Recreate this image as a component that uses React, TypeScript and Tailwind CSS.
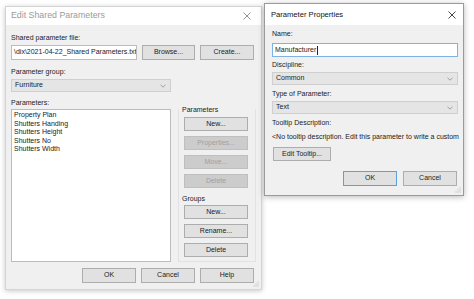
import React from 'react';

const font = { fontFamily: '"Liberation Sans", Arial, sans-serif' };

function CloseX({ dark }: { dark?: boolean }) {
  return (
    <svg width="8" height="8" viewBox="0 0 8 8" className="block">
      <path d="M0.5 0.5 L7.5 7.5 M7.5 0.5 L0.5 7.5" stroke={dark ? '#333' : '#8a8a8a'} strokeWidth="0.9" />
    </svg>
  );
}

function Chevron() {
  return (
    <svg width="6" height="4" viewBox="0 0 6 4" className="block">
      <path d="M0.5 0.8 L3 3.2 L5.5 0.8" stroke="#8c8c8c" strokeWidth="0.8" fill="none" />
    </svg>
  );
}

function Grip() {
  return (
    <svg width="6" height="6" viewBox="0 0 6 6" className="absolute right-[2px] bottom-[2px]">
      {[[5, 1], [3, 3], [5, 3], [1, 5], [3, 5], [5, 5]].map(([x, y], i) => (
        <rect key={i} x={x - 0.5} y={y - 0.5} width="1" height="1" fill="#b5b5b5" />
      ))}
    </svg>
  );
}

function Btn({ children, w, h = 'h-[15px]', disabled, def }: { children: React.ReactNode; w: string; h?: string; disabled?: boolean; def?: boolean }) {
  return (
    <div
      className={`${w} ${h} flex items-center justify-center text-[7px] border ${
        disabled
          ? 'bg-[#cccccc] border-[#bfbfbf] text-[#a0a0a0]'
          : def
          ? 'bg-[#e1e1e1] border-[#5e9fdc] text-[#222]'
          : 'bg-[#e1e1e1] border-[#adadad] text-[#222]'
      }`}
    >
      {children}
    </div>
  );
}

function Select({ value, w }: { value: string; w: string }) {
  return (
    <div className={`${w} h-[13px] bg-[#e5e5e5] border border-[#cfcfcf] flex items-center justify-between pl-[3px] pr-[4px] text-[7px] text-[#222]`}>
      <span>{value}</span>
      <Chevron />
    </div>
  );
}

function Label({ children, className = '' }: { children: React.ReactNode; className?: string }) {
  return <div className={`h-[9px] leading-[9px] text-[7px] text-[#222] whitespace-nowrap ${className}`}>{children}</div>;
}

function EditShared() {
  return (
    <div className="relative ml-[5px] mt-[6px] w-[257px] h-[284px] border border-[#d4d4d4] bg-[#f0f0f0] shadow-[0_1px_5px_rgba(0,0,0,0.22)] flex flex-col">
      <div className="h-[18px] bg-white flex items-center justify-between pl-[5px] pr-[10px]">
        <span className="text-[8.8px] text-[#9a9a9a]">Edit Shared Parameters</span>
        <CloseX />
      </div>
      <div className="flex-1 flex flex-col px-[5px]">
        <Label className="mt-[8px]">Shared parameter file:</Label>
        <div className="mt-[3px] flex gap-[5px]">
          <div className="w-[126px] h-[15px] bg-white border border-[#bcbcbc] flex items-center pl-[2px] text-[7px] text-[#222] overflow-hidden whitespace-nowrap">
            \dix\2021-04-22_Shared Parameters.txt
          </div>
          <Btn w="w-[53px]">Browse...</Btn>
          <Btn w="w-[54px]">Create...</Btn>
        </div>
        <Label className="mt-[7px]">Parameter group:</Label>
        <div className="mt-[3px]">
          <Select value="Furniture" w="w-[160px]" />
        </div>
        <Label className="mt-[6px]">Parameters:</Label>
        <div className="mt-[2px] flex">
          <div className="w-[160px] h-[153px] bg-white border border-[#bcbcbc] pl-[2px] pt-[1px] text-[7px] leading-[8.5px] text-[#222]">
            <div>Property Plan</div>
            <div>Shutters Handing</div>
            <div>Shutters Height</div>
            <div>Shutters No</div>
            <div>Shutters Width</div>
          </div>
          <div className="ml-[7px] w-[78px] h-[153px] border border-[#e2e2e2] border-t-0 flex flex-col">
            <Label className="-mt-[4px] ml-[3px]">Parameters</Label>
            <div className="mt-[3px] ml-[5px] flex flex-col gap-[5px]">
              <Btn w="w-[64px]" h="h-[14px]">New...</Btn>
              <Btn w="w-[64px]" h="h-[14px]" disabled>Properties...</Btn>
              <Btn w="w-[64px]" h="h-[14px]" disabled>Move...</Btn>
              <Btn w="w-[64px]" h="h-[14px]" disabled>Delete</Btn>
            </div>
            <Label className="mt-[6px] ml-[3px]">Groups</Label>
            <div className="mt-[2px] ml-[5px] flex flex-col gap-[5px]">
              <Btn w="w-[64px]" h="h-[14px]">New...</Btn>
              <Btn w="w-[64px]" h="h-[14px]">Rename...</Btn>
              <Btn w="w-[64px]" h="h-[14px]">Delete</Btn>
            </div>
          </div>
        </div>
        <div className="mt-[6px] flex justify-end gap-[5px] pr-[2px]">
          <Btn w="w-[54px]">OK</Btn>
          <Btn w="w-[54px]">Cancel</Btn>
          <Btn w="w-[54px]">Help</Btn>
        </div>
      </div>
      <Grip />
    </div>
  );
}

function ParamProps() {
  return (
    <div className="relative ml-[2px] mt-[3px] w-[200px] h-[193px] border border-[#9a9a9a] bg-[#f0f0f0] shadow-[0_1px_6px_rgba(0,0,0,0.28)] flex flex-col">
      <div className="h-[21px] bg-white flex items-center justify-between pl-[6px] pr-[7px]">
        <span className="text-[7.6px] text-[#111]">Parameter Properties</span>
        <CloseX dark />
      </div>
      <div className="flex-1 flex flex-col pl-[7px] pr-[5px]">
        <Label className="mt-[4px]">Name:</Label>
        <div className="mt-[5px] w-[186px] h-[14px] bg-white border border-[#7eb2e4] flex items-center pl-[2px] text-[7px] text-[#222]">
          Manufacturer<span className="inline-block w-[0.7px] h-[9px] bg-[#222] ml-[0.5px]" />
        </div>
        <Label className="mt-[3px]">Discipline:</Label>
        <div className="mt-[3px]">
          <Select value="Common" w="w-[186px]" />
        </div>
        <Label className="mt-[4px]">Type of Parameter:</Label>
        <div className="mt-[3px]">
          <Select value="Text" w="w-[186px]" />
        </div>
        <Label className="mt-[4px]">Tooltip Description:</Label>
        <Label className="mt-[5px] text-[6.9px]">&lt;No tooltip description. Edit this parameter to write a custom</Label>
        <div className="mt-[6px] ml-[1px]">
          <Btn w="w-[58px]" h="h-[14px]">Edit Tooltip...</Btn>
        </div>
        <div className="mt-[10px] flex justify-end gap-[6px] pr-[1px]">
          <Btn w="w-[54px]" h="h-[15px]" def>OK</Btn>
          <Btn w="w-[54px]" h="h-[15px]">Cancel</Btn>
        </div>
      </div>
      <Grip />
    </div>
  );
}

export default function App() {
  return (
    <div className="w-[474px] h-[299px] bg-white flex items-start overflow-hidden" style={font}>
      <EditShared />
      <ParamProps />
    </div>
  );
}
